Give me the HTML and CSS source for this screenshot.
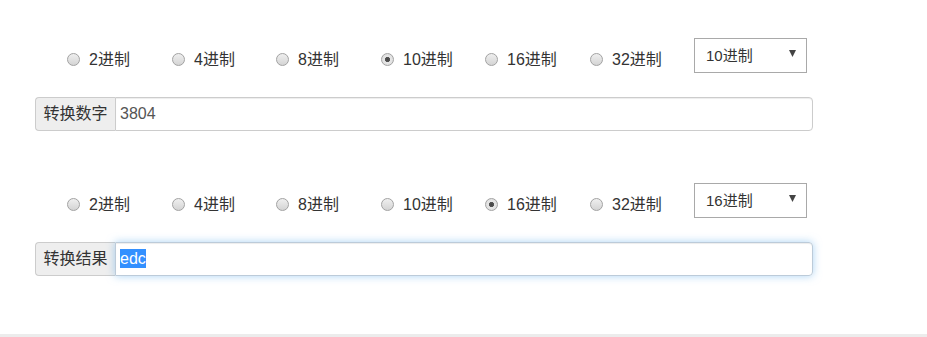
FILE: index.html
```html
<!DOCTYPE html>
<html lang="zh-CN">
<head>
<meta charset="utf-8">
<title>进制转换</title>
<link rel="stylesheet" href="styles.css">
</head>
<body>
<div class="page">
  <section class="converter">
    <div class="base-row">
      <label class="opt"><span class="radio"></span><span>2进制</span></label>
      <label class="opt"><span class="radio"></span><span>4进制</span></label>
      <label class="opt"><span class="radio"></span><span>8进制</span></label>
      <label class="opt"><span class="radio checked"></span><span>10进制</span></label>
      <label class="opt"><span class="radio"></span><span>16进制</span></label>
      <label class="opt"><span class="radio"></span><span>32进制</span></label>
      <div class="select"><span>10进制</span><svg class="caret" width="7" height="7" viewBox="0 0 7 7"><path d="M0 0H7L3.5 7Z" fill="#444"/></svg></div>
    </div>
    <div class="input-group">
      <span class="addon">转换数字</span>
      <div class="field">3804</div>
    </div>
  </section>
  <section class="converter second">
    <div class="base-row">
      <label class="opt"><span class="radio"></span><span>2进制</span></label>
      <label class="opt"><span class="radio"></span><span>4进制</span></label>
      <label class="opt"><span class="radio"></span><span>8进制</span></label>
      <label class="opt"><span class="radio"></span><span>10进制</span></label>
      <label class="opt"><span class="radio checked"></span><span>16进制</span></label>
      <label class="opt"><span class="radio"></span><span>32进制</span></label>
      <div class="select"><span>16进制</span><svg class="caret" width="7" height="7" viewBox="0 0 7 7"><path d="M0 0H7L3.5 7Z" fill="#444"/></svg></div>
    </div>
    <div class="input-group">
      <span class="addon">转换结果</span>
      <div class="field focus"><span class="sel">edc</span></div>
    </div>
  </section>
  <div class="footer-line"></div>
</div>
</body>
</html>
```
FILE: styles.css
```css
html, body {
  margin: 0;
  padding: 0;
  background: #fff;
}
body {
  font-family: "Liberation Sans", "Noto Sans CJK SC", sans-serif;
  font-size: 16px;
  color: #333;
  line-height: 20px;
}
.page {
  width: 927px;
  height: 337px;
  overflow: hidden;
  display: flex;
  flex-direction: column;
}
.converter {
  margin-top: 38px;
  padding-left: 35px;
  width: 778px;
}
.converter.second {
  margin-top: 52px;
}
.base-row {
  display: grid;
  grid-template-columns: 105px 104px 105px 104px 105px 104px 113px;
  padding-left: 32px;
  height: 35px;
  align-items: start;
}
.opt {
  margin-top: 12px;
  display: flex;
  align-items: center;
  gap: 9px;
  cursor: pointer;
}
.radio {
  width: 13px;
  height: 13px;
  flex-shrink: 0;
  box-sizing: border-box;
  border-radius: 50%;
  border: 1px solid #a2a2a2;
  background: linear-gradient(#efefef, #d4d4d4);
  margin-top: -1px;
}
.radio.checked {
  background: radial-gradient(circle, #444 0, #555 2.3px, #e6e6e6 2.9px, #dadada 100%);
}
.select {
  box-sizing: border-box;
  width: 113px;
  height: 35px;
  border: 1px solid #a9a9a9;
  display: flex;
  align-items: center;
  justify-content: space-between;
  padding: 0 10px 0 11px;
  font-size: 15px;
  color: #333;
}
.caret {
  display: block;
  margin-top: -5px;
}
.input-group {
  margin-top: 24px;
  display: flex;
  height: 34px;
}
.addon {
  box-sizing: border-box;
  width: 80px;
  height: 34px;
  padding: 6px 0;
  text-align: center;
  background: #eee;
  border: 1px solid #ccc;
  border-right: 0;
  border-radius: 4px 0 0 4px;
  color: #333;
  white-space: nowrap;
}
.field {
  box-sizing: border-box;
  flex: 1;
  height: 34px;
  padding: 6px 4px;
  border: 1px solid #ccc;
  border-radius: 0 4px 4px 0;
  color: #555;
  box-shadow: inset 0 1px 1px rgba(0,0,0,.075);
}
.field.focus {
  border-color: #bccbd9;
  box-shadow: inset 0 1px 1px rgba(0,0,0,.075), 0 0 8px rgba(102,175,233,.55);
}
.sel {
  background: #3390ff;
  color: #fff;
  padding: 1px 0;
}
.footer-line {
  margin-top: 58px;
  height: 4px;
  background: #ececec;
  flex-shrink: 0;
}
```
